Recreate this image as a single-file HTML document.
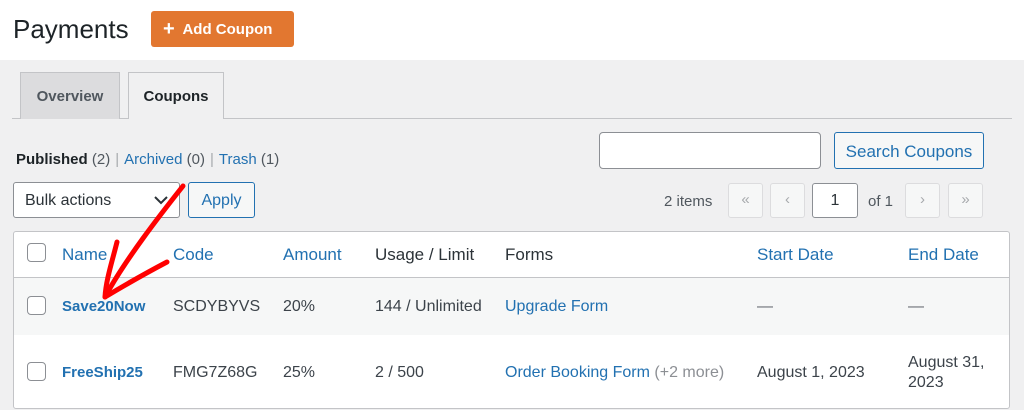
<!DOCTYPE html>
<html><head><style>
*{box-sizing:border-box;margin:0;padding:0}
body{width:1024px;height:410px;overflow:hidden;background:#f0f0f1;font-family:"Liberation Sans",sans-serif;font-size:16px;color:#3c434a;position:relative}
.a{position:absolute;white-space:nowrap}
.blue{color:#2271b1}
.btn{position:absolute;border:1px solid #2271b1;border-radius:3px;background:#f6f7f7;color:#2271b1;text-align:center}
.pg{position:absolute;top:183px;width:35px;height:35px;border:1px solid #dcdcde;border-radius:3px;background:#f6f7f7;color:#a7aaad;text-align:center;line-height:32px;font-size:15px}
.cb{position:absolute;left:27px;width:19px;height:19px;border:1px solid #8c8f94;border-radius:4px;background:#fff}
.h{font-size:17px}
.sep{color:#a7aaad;margin:0 5px}
</style></head><body>
<div class="a" style="left:0;top:0;width:1024px;height:60px;background:#fff"></div>
<div class="a" style="left:13px;top:14px;font-size:26px;color:#1d2327">Payments</div>
<div class="a" style="left:151px;top:11px;width:143px;height:36px;background:#e27730;border-radius:3px;color:#fff;font-weight:bold;font-size:15px;line-height:36px;padding-left:12px"><span style="font-size:20px;vertical-align:-1px">+</span>&nbsp; Add Coupon</div>
<div class="a" style="left:12px;top:118px;width:1000px;height:1px;background:#c3c4c7"></div>
<div class="a" style="left:20px;top:72px;width:100px;height:47px;background:#dcdcde;border:1px solid #c3c4c7;border-bottom:none;text-align:center;line-height:48px;font-weight:bold;font-size:15px;color:#50575e">Overview</div>
<div class="a" style="left:128px;top:72px;width:96px;height:47px;background:#f0f0f1;border:1px solid #c3c4c7;border-bottom:none;text-align:center;line-height:48px;font-weight:bold;font-size:15px;color:#1d2327">Coupons</div>
<div class="a" style="left:16px;top:151px;font-size:15px"><b style="color:#1d2327">Published</b> <span style="color:#50575e">(2)</span><span class="sep">|</span><span class="blue">Archived</span> <span style="color:#50575e">(0)</span><span class="sep">|</span><span class="blue">Trash</span> <span style="color:#50575e">(1)</span></div>
<div class="a" style="left:13px;top:182px;width:167px;height:36px;background:#fff;border:1px solid #8c8f94;border-radius:3px;padding-left:11px;line-height:36px;color:#2c3338">Bulk actions</div>
<svg class="a" style="left:154px;top:195px" width="14" height="10"><path d="M1 2l6 6 6-6" stroke="#2c3338" stroke-width="2" fill="none"/></svg>
<div class="btn" style="left:188px;top:182px;width:67px;height:36px;line-height:36px">Apply</div>
<div class="a" style="left:599px;top:132px;width:222px;height:37px;background:#fff;border:1px solid #8c8f94;border-radius:4px"></div>
<div class="btn" style="left:834px;top:132px;width:150px;height:37px;line-height:37px;font-size:17px">Search Coupons</div>
<div class="a" style="left:664px;top:193px;font-size:15px;color:#50575e">2 items</div>
<div class="pg" style="left:728px">«</div>
<div class="pg" style="left:770px">‹</div>
<div class="a" style="left:812px;top:183px;width:46px;height:35px;border:1px solid #8c8f94;border-radius:3px;background:#fff;text-align:center;line-height:34px;color:#2c3338">1</div>
<div class="a" style="left:868px;top:193px;font-size:15px;color:#50575e">of 1</div>
<div class="pg" style="left:905px">›</div>
<div class="pg" style="left:948px">»</div>
<div class="a" style="left:13px;top:231px;width:997px;height:178px;background:#fff;border:1px solid #c3c4c7;border-radius:3px"></div>
<div class="a" style="left:14px;top:277px;width:995px;height:1px;background:#c3c4c7"></div>
<div class="a" style="left:14px;top:278px;width:995px;height:57px;background:#f6f7f7"></div>
<div class="cb" style="top:243px"></div><div class="cb" style="top:296px"></div><div class="cb" style="top:362px"></div>
<div class="a blue h" style="left:62px;top:245px">Name</div>
<div class="a blue h" style="left:173px;top:245px">Code</div>
<div class="a blue h" style="left:283px;top:245px">Amount</div>
<div class="a h" style="left:375px;top:245px;color:#2c3338">Usage / Limit</div>
<div class="a h" style="left:505px;top:245px;color:#2c3338">Forms</div>
<div class="a blue h" style="left:757px;top:245px">Start Date</div>
<div class="a blue h" style="left:908px;top:245px">End Date</div>
<div class="a blue" style="left:62px;top:298px;font-weight:bold;font-size:15px">Save20Now</div>
<div class="a" style="left:173px;top:298px">SCDYBYVS</div>
<div class="a" style="left:283px;top:298px">20%</div>
<div class="a" style="left:375px;top:298px">144 / Unlimited</div>
<div class="a blue" style="left:505px;top:298px">Upgrade Form</div>
<div class="a" style="left:757px;top:298px;color:#646970">—</div>
<div class="a" style="left:908px;top:298px;color:#646970">—</div>
<div class="a blue" style="left:62px;top:364px;font-weight:bold;font-size:15px">FreeShip25</div>
<div class="a" style="left:173px;top:364px">FMG7Z68G</div>
<div class="a" style="left:283px;top:364px">25%</div>
<div class="a" style="left:375px;top:364px">2 / 500</div>
<div class="a" style="left:505px;top:364px"><span class="blue">Order Booking Form</span> <span style="color:#8c8f94">(+2 more)</span></div>
<div class="a" style="left:757px;top:364px">August 1, 2023</div>
<div class="a" style="left:908px;top:353px;line-height:20px">August 31,<br>2023</div>
<svg class="a" style="left:0;top:0" width="1024" height="410"><g stroke="#f00" stroke-width="5" fill="none" stroke-linecap="round" stroke-linejoin="round"><path d="M183 186 C160 215 125 260 105 297"/><path d="M117 242 C112 262 106 280 105 297 C125 285 148 272 167 262"/></g></svg>
</body></html>
